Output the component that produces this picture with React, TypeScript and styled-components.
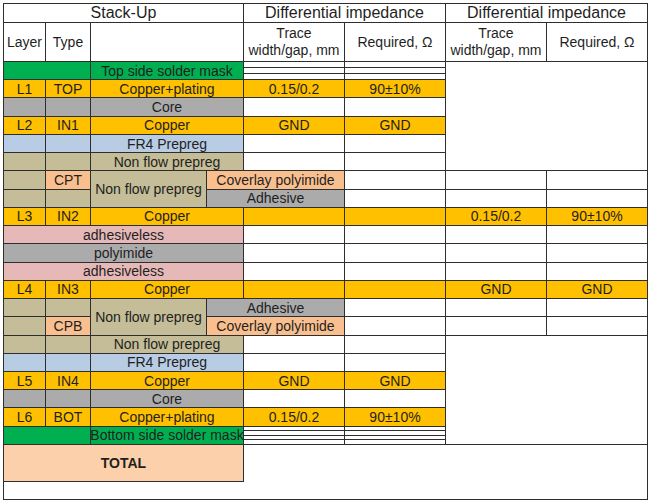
import React from "react";
import styled, { createGlobalStyle } from "styled-components";

const Global = createGlobalStyle`
  html, body { margin: 0; padding: 0; background: #ffffff; }
  body { font-family: "Liberation Sans", Arial, sans-serif; }
`;

const COLORS = {
  Y: "#FFC000",
  G: "#ABABAB",
  GR: "#00B050",
  K: "#C4BD97",
  B: "#B8CCE4",
  P: "#FABF8F",
  PK: "#E6B8B7",
  W: "#FFFFFF",
} as const;

type ColorKey = keyof typeof COLORS;

const Page = styled.div`
  padding: 3px 0 0 3px;
`;

const Sheet = styled.div`
  display: grid;
  width: max-content;
  grid-template-columns: 41px 44px 115px 36px 100px 100px 100px 100px;
  grid-template-rows: 18px 38px repeat(21, 17.24px) 54px;
  gap: 1px;
  padding: 1px;
  background: #2e2e2e;
  color: #1f1f1f;
  font-size: 14px;
`;

const Cell = styled.div<{
  $c: number;
  $cs: number;
  $r: number;
  $rs: number;
  $bg: string;
  $size: number;
}>`
  grid-column: ${(p) => p.$c} / span ${(p) => p.$cs};
  grid-row: ${(p) => p.$r} / span ${(p) => p.$rs};
  background: ${(p) => p.$bg};
  display: flex;
  align-items: center;
  justify-content: center;
  text-align: center;
  white-space: nowrap;
  overflow: hidden;
  font-size: ${(p) => p.$size}px;
  line-height: 1;
`;

const HeadText = styled.span`
  white-space: normal;
  line-height: 17px;
  font-size: 14px;
`;

const MaskLines = styled.div`
  display: flex;
  flex-direction: column;
  width: 100%;
  height: 100%;
  background: #2e2e2e;
  gap: 1px;
`;

const MaskStrip = styled.div`
  flex: 1;
  background: #ffffff;
`;

const Bottom = styled.div`
  grid-column: 1 / -1;
  grid-row: 24;
  background: #ffffff;
  display: flex;
  align-items: flex-start;
`;

const TotalBox = styled.div`
  width: 239px;
  height: 36px;
  border-right: 1px solid #2e2e2e;
  border-bottom: 1px solid #2e2e2e;
  background: #FCD0AA;
  display: flex;
  align-items: center;
  justify-content: center;
  font-weight: bold;
  font-size: 14px;
`;

type Def = {
  c: number;
  cs?: number;
  r: number;
  rs?: number;
  bg?: ColorKey;
  t?: React.ReactNode;
  size?: number;
  mask?: number;
};

const defs: Def[] = [];
const add = (d: Def) => defs.push(d);

// Header
add({ c: 1, cs: 4, r: 1, t: "Stack-Up", size: 16 });
add({ c: 5, cs: 2, r: 1, t: "Differential impedance", size: 16 });
add({ c: 7, cs: 2, r: 1, t: "Differential impedance", size: 16 });
add({ c: 1, r: 2, t: "Layer" });
add({ c: 2, r: 2, t: "Type" });
add({ c: 3, cs: 2, r: 2 });
const traceHead = (
  <HeadText>
    Trace
    <br />
    width/gap, mm
  </HeadText>
);
add({ c: 5, r: 2, t: traceHead });
add({ c: 6, r: 2, t: "Required, Ω" });
add({ c: 7, r: 2, t: traceHead });
add({ c: 8, r: 2, t: "Required, Ω" });

const R = (b: number) => b + 2;

type Simple = [ColorKey, string, string, ColorKey, string, ColorKey, string, ColorKey, string];

// layer-like rows: c1, c2, c3-4 material, c5, c6
const simpleRow = (
  b: number,
  layerBg: ColorKey,
  layer: string,
  typeBg: ColorKey,
  type: string,
  matBg: ColorKey,
  mat: string,
  v5Bg: ColorKey,
  v5: string,
  v6Bg: ColorKey,
  v6: string
) => {
  add({ c: 1, r: R(b), bg: layerBg, t: layer });
  add({ c: 2, r: R(b), bg: typeBg, t: type });
  add({ c: 3, cs: 2, r: R(b), bg: matBg, t: mat });
  add({ c: 5, r: R(b), bg: v5Bg, t: v5 });
  add({ c: 6, r: R(b), bg: v6Bg, t: v6 });
};

// b1 top mask
add({ c: 1, cs: 2, r: R(1), bg: "GR" });
add({ c: 3, cs: 2, r: R(1), bg: "GR", t: "Top side solder mask" });
add({ c: 5, r: R(1), mask: 3 });
add({ c: 6, r: R(1), mask: 3 });
add({ c: 7, cs: 2, r: R(1), rs: 6 });

simpleRow(2, "Y", "L1", "Y", "TOP", "Y", "Copper+plating", "Y", "0.15/0.2", "Y", "90±10%");
simpleRow(3, "G", "", "G", "", "G", "Core", "W", "", "W", "");
simpleRow(4, "Y", "L2", "Y", "IN1", "Y", "Copper", "Y", "GND", "Y", "GND");
simpleRow(5, "B", "", "B", "", "B", "FR4 Prepreg", "W", "", "W", "");
simpleRow(6, "K", "", "K", "", "K", "Non flow prepreg", "W", "", "W", "");

// coverlay block helper
const coverlay = (b: number, first: "cov" | "adh", typeLabel: string, typeRow: 0 | 1) => {
  for (let i = 0; i < 2; i++) {
    const row = R(b + i);
    const isType = i === typeRow;
    add({ c: 1, r: row, bg: "K" });
    add({ c: 2, r: row, bg: isType ? "P" : "K", t: isType ? typeLabel : "" });
    const kind = (i === 0) === (first === "cov") ? "cov" : "adh";
    add({
      c: 4,
      cs: 2,
      r: row,
      bg: kind === "cov" ? "P" : "G",
      t: kind === "cov" ? "Coverlay polyimide" : "Adhesive",
    });
    add({ c: 6, r: row });
    add({ c: 7, r: row });
    add({ c: 8, r: row });
  }
  add({ c: 3, r: R(b), rs: 2, bg: "K", t: "Non flow prepreg" });
};

coverlay(7, "cov", "CPT", 0);

// b9 L3
simpleRow(9, "Y", "L3", "Y", "IN2", "Y", "Copper", "Y", "", "Y", "");
add({ c: 7, r: R(9), bg: "Y", t: "0.15/0.2" });
add({ c: 8, r: R(9), bg: "Y", t: "90±10%" });

const fullRow = (b: number, bg: ColorKey, t: string) => {
  add({ c: 1, cs: 4, r: R(b), bg, t });
  for (let c = 5; c <= 8; c++) add({ c, r: R(b) });
};
fullRow(10, "PK", "adhesiveless");
fullRow(11, "G", "polyimide");
fullRow(12, "PK", "adhesiveless");

simpleRow(13, "Y", "L4", "Y", "IN3", "Y", "Copper", "Y", "", "Y", "");
add({ c: 7, r: R(13), bg: "Y", t: "GND" });
add({ c: 8, r: R(13), bg: "Y", t: "GND" });

coverlay(14, "adh", "CPB", 1);

simpleRow(16, "K", "", "K", "", "K", "Non flow prepreg", "W", "", "W", "");
add({ c: 7, cs: 2, r: R(16), rs: 6 });
simpleRow(17, "B", "", "B", "", "B", "FR4 Prepreg", "W", "", "W", "");
simpleRow(18, "Y", "L5", "Y", "IN4", "Y", "Copper", "Y", "GND", "Y", "GND");
simpleRow(19, "G", "", "G", "", "G", "Core", "W", "", "W", "");
simpleRow(20, "Y", "L6", "Y", "BOT", "Y", "Copper+plating", "Y", "0.15/0.2", "Y", "90±10%");

add({ c: 1, cs: 2, r: R(21), bg: "GR" });
add({ c: 3, cs: 2, r: R(21), bg: "GR", t: "Bottom side solder mask" });
add({ c: 5, r: R(21), mask: 4 });
add({ c: 6, r: R(21), mask: 4 });

export default function App() {
  return (
    <Page>
      <Global />
      <Sheet>
        {defs.map((d, i) => (
          <Cell
            key={i}
            $c={d.c}
            $cs={d.cs ?? 1}
            $r={d.r}
            $rs={d.rs ?? 1}
            $bg={COLORS[d.bg ?? "W"]}
            $size={d.size ?? 14}
          >
            {d.mask ? (
              <MaskLines>
                {Array.from({ length: d.mask }).map((_, k) => (
                  <MaskStrip key={k} />
                ))}
              </MaskLines>
            ) : (
              d.t
            )}
          </Cell>
        ))}
        <Bottom>
          <TotalBox>TOTAL</TotalBox>
        </Bottom>
      </Sheet>
    </Page>
  );
}
